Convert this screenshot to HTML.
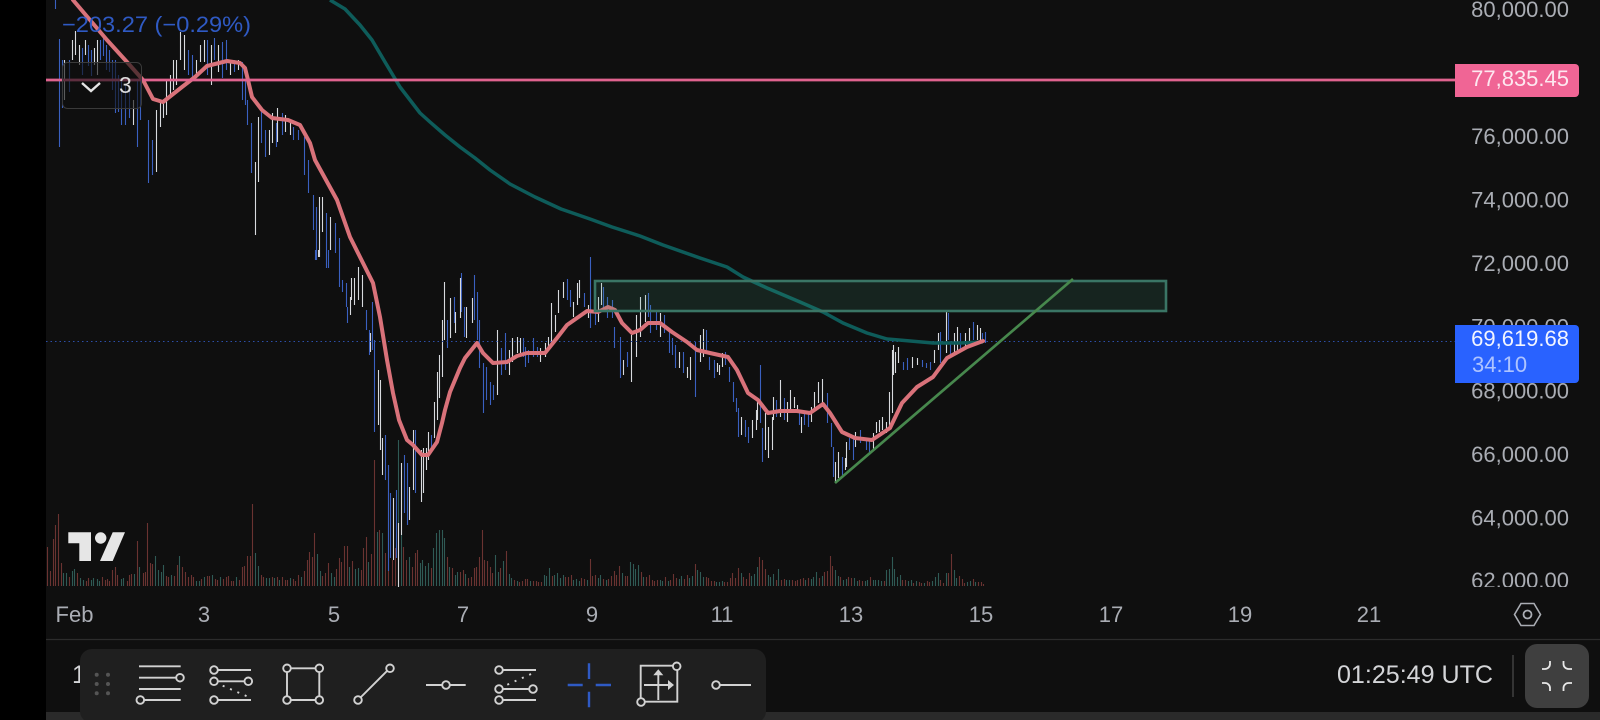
<!DOCTYPE html>
<html><head><meta charset="utf-8"><title>Chart</title>
<style>html,body{margin:0;padding:0;background:#000;width:1600px;height:720px;overflow:hidden}svg{display:block}text{font-family:"Liberation Sans",sans-serif}</style></head>
<body>
<svg xmlns="http://www.w3.org/2000/svg" width="1600" height="720" viewBox="0 0 1600 720">
<defs><clipPath id="c"><rect x="46" y="0" width="1554" height="587"/></clipPath></defs>
<rect width="1600" height="720" fill="#000"/>
<rect x="46" width="1554" height="720" fill="#0f0f0f"/>
<rect x="46" y="712" width="1554" height="8" fill="#2a2a2a"/>
<!-- volume -->
<g transform="translate(.5 0)" fill="none" stroke-width="1.1">
<path stroke="#6a3331" d="M47 586V547M50 586V571M53 586V539M55 586V525M58 586V514M61 586V563M69 586V577M77 586V573M86 586V581M88 586V578M102 586V577M105 586V580M107 586V579M109 586V581M112 586V570M115 586V567M117 586V575M127 586V581M129 586V575M131 586V574M137 586V541M143 586V573M145 586V572M147 586V523M150 586V563M152 586V564M166 586V576M168 586V577M174 586V576M177 586V565M182 586V567M185 586V572M188 586V577M191 586V575M193 586V577M201 586V579M207 586V576M209 586V576M215 586V579M217 586V580M223 586V579M226 586V577M228 586V576M231 586V581M233 586V581M239 586V580M242 586V567M244 586V566M247 586V556M250 586V556M252 586V504M261 586V575M263 586V577M272 586V577M277 586V577M282 586V577M285 586V580M287 586V580M293 586V579M295 586V581M298 586V575M304 586V571M307 586V560M309 586V552M312 586V557M314 586V533M322 586V576M325 586V573M328 586V563M336 586V569M339 586V558M341 586V562M344 586V546M347 586V546M352 586V561M361 586V570M363 586V548M366 586V537M371 586V554M374 586V460M379 586V530M385 586V553M388 586V465M392 586V560M395 586V548M403 586V547M406 586V560M412 586V567M415 586V553M417 586V550M431 586V568M447 586V557M452 586V568M460 586V572M463 586V570M468 586V578M471 586V577M474 586V568M476 586V567M479 586V557M482 586V530M484 586V560M487 586V561M490 586V567M492 586V573M500 586V568M506 586V551M514 586V580M519 586V582M522 586V581M525 586V579M527 586V579M533 586V581M536 586V581M538 586V582M541 586V582M552 586V576M565 586V577M568 586V577M571 586V575M581 586V578M584 586V579M590 586V559M592 586V576M595 586V575M603 586V579M608 586V579M611 586V576M614 586V571M616 586V575M619 586V566M625 586V576M627 586V576M641 586V572M646 586V577M649 586V575M652 586V580M654 586V581M657 586V580M665 586V577M670 586V580M673 586V574M676 586V578M684 586V579M687 586V575M695 586V564M706 586V577M708 586V578M711 586V581M714 586V581M724 586V582M727 586V582M730 586V578M732 586V573M735 586V578M738 586V568M743 586V577M746 586V579M749 586V573M759 586V557M762 586V560M765 586V569M776 586V580M781 586V580M784 586V579M792 586V580M795 586V581M797 586V580M800 586V579M803 586V578M808 586V578M819 586V578M824 586V572M827 586V571M830 586V556M832 586V566M840 586V577M848 586V577M851 586V578M859 586V580M862 586V581M870 586V577M884 586V581M902 586V580M905 586V580M913 586V583M919 586V582M921 586V583M927 586V581M929 586V582M940 586V580M943 586V583M948 586V573M951 586V554M959 586V576M962 586V579M964 586V583M973 586V579M978 586V582M981 586V582M983 586V584"/>
<path stroke="#2f5a55" d="M63 586V573M66 586V573M72 586V571M74 586V569M80 586V578M83 586V580M91 586V580M93 586V578M97 586V579M99 586V581M121 586V579M123 586V578M134 586V574M139 586V567M155 586V556M158 586V570M161 586V572M163 586V565M171 586V575M179 586V556M196 586V581M199 586V581M204 586V577M212 586V575M220 586V577M236 586V577M255 586V553M258 586V566M266 586V578M269 586V578M274 586V578M279 586V580M290 586V578M301 586V577M317 586V554M320 586V571M331 586V573M334 586V577M349 586V567M355 586V569M358 586V568M368 586V562M377 586V532M382 586V533M398 586V440M401 586V535M409 586V557M420 586V563M422 586V560M425 586V566M428 586V563M433 586V548M436 586V533M439 586V530M442 586V530M444 586V538M449 586V567M455 586V575M457 586V572M465 586V574M495 586V555M498 586V572M503 586V561M509 586V574M511 586V578M517 586V581M530 586V581M544 586V575M546 586V576M549 586V568M554 586V575M557 586V573M560 586V578M563 586V575M573 586V580M576 586V579M579 586V581M587 586V580M598 586V578M600 586V575M606 586V580M622 586V573M630 586V562M633 586V564M635 586V569M638 586V565M643 586V577M660 586V580M662 586V581M668 586V581M679 586V579M681 586V576M689 586V578M692 586V576M697 586V570M700 586V572M703 586V577M716 586V582M719 586V582M722 586V581M741 586V573M751 586V576M754 586V574M757 586V567M768 586V575M770 586V577M773 586V574M778 586V569M786 586V580M789 586V580M805 586V580M811 586V579M813 586V577M816 586V572M822 586V576M835 586V570M838 586V576M843 586V580M846 586V579M854 586V578M857 586V581M865 586V581M867 586V580M873 586V580M875 586V580M878 586V580M881 586V581M886 586V570M889 586V569M892 586V557M894 586V569M897 586V577M900 586V575M908 586V581M911 586V580M916 586V581M924 586V583M932 586V581M935 586V577M938 586V573M946 586V573M954 586V570M956 586V578M967 586V582M970 586V581M975 586V582"/>
</g>
<!-- candles -->
<g transform="translate(.5 0)" fill="none" stroke-width="1.1">
<path stroke="#3a60c0" d="M55 0V9M59 39V147M62 60V108M69 60V92M82 48V75M88 45V66M91 50V76M100 40V60M103 38V56M106 45V70M109 50V72M112 60V90M115 60V113M118 75V112M121 80V125M125 85V125M129 90V118M137 80V147M140 80V120M148 120V183M152 140V175M188 50V75M192 55V80M207 40V75M214 38V60M222 42V78M226 40V70M234 60V72M242 62V100M245 80V105M247 100V125M251 123V173M261 110V143M265 130V157M276 123V147M282 113V135M293 127V140M298 130V140M304 137V175M308 160V193M313 195V230M316 207V260M326 213V268M335 223V253M339 238V285M346 283V300M315 250V260M328 250V268M339 270V287M342 280V292M346 292V307M347 307V323M366 310V330M369 330V355M372 302V350M374 340V432M385 435V480M388 465V571M390 493V558M396 490V558M404 455V513M407 463V525M415 430V493M431 435V452M447 320V348M454 297V323M461 273V312M464 307V337M474 275V320M477 292V340M479 320V368M483 363V413M486 367V400M490 382V405M493 385V400M501 348V375M505 333V370M523 338V357M525 347V367M528 350V363M533 338V357M537 347V357M567 279V300M570 290V307M584 293V307M590 257V328M595 300V325M603 287V308M607 297V318M612 300V318M614 327V348M620 337V378M627 352V367M648 293V317M650 305V333M656 312V330M664 315V333M669 330V353M672 338V355M675 345V368M683 352V373M695 342V397M706 330V350M709 357V370M714 360V378M725 352V365M729 367V382M733 382V402M736 398V412M738 408V437M745 420V437M748 427V443M760 365V423M762 428V462M776 400V417M784 398V420M799 413V425M804 413V425M808 413V427M827 393V423M831 423V447M833 447V477M842 457V477M849 438V450M853 438V460M860 430V443M866 440V450M869 438V455M903 362V370M907 358V370M922 360V367M926 363V368M930 362V370M940 332V363M948 313V340M950 343V357M960 333V350M973 322V340M982 333V343M985 332V343"/>
<path stroke="#d8dade" d="M64 60V100M72 40V60M75 31V55M79 45V65M85 40V55M94 48V65M97 40V75M133 100V125M156 110V172M160 100V127M163 100V118M166 80V115M170 75V95M173 60V90M176 60V85M180 32V60M184 35V70M196 60V75M200 45V62M204 40V62M211 45V85M218 45V72M230 60V75M238 60V70M255 162V235M258 117V182M269 130V155M272 113V143M277 108V142M285 115V132M290 120V135M319 197V257M322 197V232M330 217V250M351 278V300M358 267V300M318 250V257M350 297V315M354 278V305M358 267V296M362 275V307M370 333V352M378 370V425M380 380V450M382 438V475M393 498V560M398 523V587M401 463V535M409 487V520M413 430V490M421 450V502M423 448V493M426 448V470M428 432V460M434 402V438M437 372V420M439 355V398M442 320V377M444 282V340M450 298V338M455 312V333M460 278V318M466 307V338M472 298V323M497 330V395M509 350V375M512 338V362M517 337V353M520 338V355M540 348V362M545 343V357M548 337V350M551 303V343M555 315V332M558 290V313M563 282V298M573 302V317M577 283V305M579 280V298M588 305V318M598 297V322M601 283V305M623 360V375M631 335V382M636 315V357M640 297V337M645 295V322M660 313V337M679 352V368M687 367V378M690 357V380M700 335V362M703 329V357M717 363V372M719 365V375M722 353V367M741 417V435M752 420V438M756 410V430M757 402V420M765 413V450M768 427V458M772 417V450M773 397V420M780 380V417M787 402V422M790 390V413M794 397V408M797 405V413M801 417V433M811 407V422M814 392V410M818 382V403M822 379V403M835 462V483M838 452V478M845 458V470M846 442V467M855 432V447M873 433V450M876 422V433M879 420V432M882 417V430M886 422V433M889 392V427M892 350V413M893 345V375M895 352V373M898 347V363M912 357V368M917 358V365M934 350V363M938 333V350M946 312V353M954 333V353M957 327V350M965 333V347M969 328V345M977 325V340M980 328V340"/>
</g>
<!-- dotted last price -->
<line x1="46" y1="341.500" x2="1455" y2="341.500" stroke="#2c4fa8" stroke-width="1" stroke-dasharray="1.500 3"/>
<!-- teal MA -->
<polyline fill="none" stroke="#0e5c5a" stroke-width="3.500" stroke-linejoin="round" points="330,0 345,9 360,25 372,40 385,62 400,87 410,100 420,113 430,122 445,135 460,147 475,158 490,170 510,184 535,197 561,209 590,219 612,227 640,236 663,245 700,258 727,267 743,277 767,288 800,302 823,312 843,323 867,333 887,339 933,343 960,343 983,342"/>
<!-- pink MA -->
<polyline fill="none" stroke="#d9727a" stroke-width="4" stroke-linejoin="round" stroke-linecap="round" points="73,0 107,40 127,62 143,80 153,99 163,102 182,87 195,77 207,66 227,61 240,63 245,68 248,80 252,97 262,110 272,118 288,120 300,125 310,143 315,160 337,200 350,237 360,257 373,283 380,317 387,360 393,393 399,420 407,440 413,445 422,455 428,455 437,442 442,423 445,410 450,392 460,368 465,358 477,343 483,353 493,363 507,362 517,356 527,353 545,353 557,338 567,325 577,318 587,311 598,312 608,307 615,310 622,323 632,333 640,330 648,323 660,323 672,332 687,342 697,350 710,353 728,357 737,370 748,393 758,400 768,413 780,411 797,411 810,413 823,404 830,413 842,432 855,438 872,440 890,428 902,403 917,387 933,377 947,358 967,347 983,341"/>
<!-- horizontal -->
<line x1="46" y1="80" x2="1455" y2="80" stroke="#e0638f" stroke-width="2.800"/>
<!-- zone -->
<rect x="595" y="281" width="571" height="30" fill="rgba(70,160,130,.15)" stroke="#3a7565" stroke-width="2.600"/>
<line x1="835" y1="483" x2="1073" y2="279" stroke="#47884d" stroke-width="2.700"/>
<!-- header text -->
<text x="62" y="32" font-size="22.500" fill="#2f5ac4" textLength="189" lengthAdjust="spacingAndGlyphs">−203.27 (−0.29%)</text>
<rect x="62.500" y="62.500" width="79" height="46" rx="5" fill="rgba(15,15,15,.62)" stroke="#3a3a3a"/>
<path d="M82 83L91 91L100 83" fill="none" stroke="#e4e4e4" stroke-width="2.400"/>
<text x="119" y="93" font-size="23" fill="#dcdcdc">3</text>
<!-- logo -->
<path fill="#e6e6e6" d="M68.300 532.300H91V561H79.300V543.300H68.300ZM112.700 532.300H125L112.700 561H100Z"/>
<circle cx="100.700" cy="538" r="5.700" fill="#e6e6e6"/>
<!-- axis -->
<g font-size="22" fill="#aaadb4" text-anchor="end">
<text x="1569" y="17">80,000.00</text>
<text x="1569" y="144">76,000.00</text>
<text x="1569" y="207.500">74,000.00</text>
<text x="1569" y="271">72,000.00</text>
<text x="1569" y="334.500">70,000.00</text>
<text x="1569" y="398.500">68,000.00</text>
<text x="1569" y="462">66,000.00</text>
<text x="1569" y="525.500">64,000.00</text>
<text x="1569" y="588" clip-path="url(#c)">62,000.00</text>
</g>
<path fill="#f06595" d="M1455 64H1575a4 4 0 0 1 4 4V93a4 4 0 0 1 -4 4H1455Z"/>
<text x="1569" y="86" font-size="22" fill="#fde8f0" text-anchor="end">77,835.45</text>
<path fill="#2962ff" d="M1455 325H1575a4 4 0 0 1 4 4V379a4 4 0 0 1 -4 4H1455Z"/>
<text x="1569" y="346" font-size="22" fill="#f2f5ff" text-anchor="end">69,619.68</text>
<text x="1472" y="372" font-size="22" fill="#aec4ff">34:10</text>
<!-- dates -->
<g font-size="22" fill="#aaadb4" text-anchor="middle">
<text x="74.500" y="622">Feb</text>
<text x="204" y="622">3</text>
<text x="334" y="622">5</text>
<text x="463" y="622">7</text>
<text x="592" y="622">9</text>
<text x="722" y="622">11</text>
<text x="851" y="622">13</text>
<text x="981" y="622">15</text>
<text x="1111" y="622">17</text>
<text x="1240" y="622">19</text>
<text x="1369" y="622">21</text>
</g>
<path fill="none" stroke="#aaadb4" stroke-width="1.600" d="M1514.500 614.500L1521 603.500H1534L1540.500 614.500L1534 625.500H1521Z"/>
<circle cx="1527.500" cy="614.500" r="4" fill="none" stroke="#aaadb4" stroke-width="1.800"/>
<line x1="46" y1="639.500" x2="1600" y2="639.500" stroke="#2c2c2c" stroke-width="1.200"/>
<!-- bottom right -->
<text x="1337" y="683" font-size="25" fill="#d4d5d8" textLength="156" lengthAdjust="spacingAndGlyphs">01:25:49 UTC</text>
<line x1="1513" y1="655" x2="1513" y2="697" stroke="#454545" stroke-width="1.400"/>
<rect x="1525" y="644" width="64" height="64" rx="12" fill="#3f3f3f"/>
<path fill="none" stroke="#e8e8e8" stroke-width="1.800" d="M1550 661V664A5 5 0 0 1 1545 669H1542M1563.500 661V664A5 5 0 0 0 1568.500 669H1572M1542 683H1545A5 5 0 0 1 1550 688V691M1572 683H1568.500A5 5 0 0 0 1563.500 688V691"/>
<!-- toolbar -->
<text x="72" y="683" font-size="25" fill="#d4d5d8">1</text>
<rect x="80" y="649" width="686" height="74" rx="12" fill="#1f1f1f"/>
<g fill="#555">
<circle cx="96.700" cy="674.700" r="2"/><circle cx="108" cy="674.700" r="2"/>
<circle cx="96.700" cy="684" r="2"/><circle cx="108" cy="684" r="2"/>
<circle cx="96.700" cy="693.300" r="2"/><circle cx="108" cy="693.300" r="2"/>
</g>
<g fill="none" stroke="#d2d2d2" stroke-width="1.900">
<path d="M139 666.300H180.700M139 677.700H176M139 689H180.700M144.300 700H180.700"/>
<circle cx="180" cy="677.700" r="3.800"/><circle cx="140.300" cy="700" r="3.800"/>
<path d="M218 670H251M218 681.300H244.500M218 700H251"/>
<circle cx="214" cy="670" r="3.800"/><circle cx="214" cy="681.300" r="3.800"/><circle cx="248.300" cy="681.300" r="3.800"/><circle cx="214" cy="700" r="3.800"/>
<path d="M222.700 685.700L247 696.300" stroke-dasharray="2 6"/>
<path d="M291 668.300H315.300M287 672.300V696M319.300 672.300V696M291 700H315.300"/>
<circle cx="287" cy="668.300" r="3.800"/><circle cx="319.300" cy="668.300" r="3.800"/><circle cx="287" cy="700" r="3.800"/><circle cx="319.300" cy="700" r="3.800"/>
<path d="M361 697L387 671"/>
<circle cx="390" cy="668.300" r="3.800"/><circle cx="358" cy="700" r="3.800"/>
<path d="M426 685H442M450 685H465.700"/>
<circle cx="446" cy="685" r="3.800"/>
<path d="M503 670H536M503 689H529M503 700H536"/>
<circle cx="499" cy="670" r="3.800"/><circle cx="499" cy="689" r="3.800"/><circle cx="533" cy="689" r="3.800"/><circle cx="499" cy="700" r="3.800"/>
<path d="M507.300 684.700L532.700 673.300" stroke-dasharray="2 6"/>
<path d="M673 665.700H640.700V698M677.300 670.300V701.700H645"/>
<circle cx="676.700" cy="666.300" r="3.800"/><circle cx="641" cy="702" r="3.800"/>
<path d="M658.300 675V700M644 685H668"/>
<path d="M720 685H751"/>
<circle cx="716" cy="685" r="3.800"/>
</g>
<path fill="#d2d2d2" d="M658.300 669.300L663.300 675.300H653.300ZM674 685L668 680V690Z"/>
<path fill="none" stroke="#2f5ac4" stroke-width="2.400" d="M589 663.300V679M589 691.700V707.300M567.700 685H582.700M595.700 685H611"/>
</svg>
</body></html>
